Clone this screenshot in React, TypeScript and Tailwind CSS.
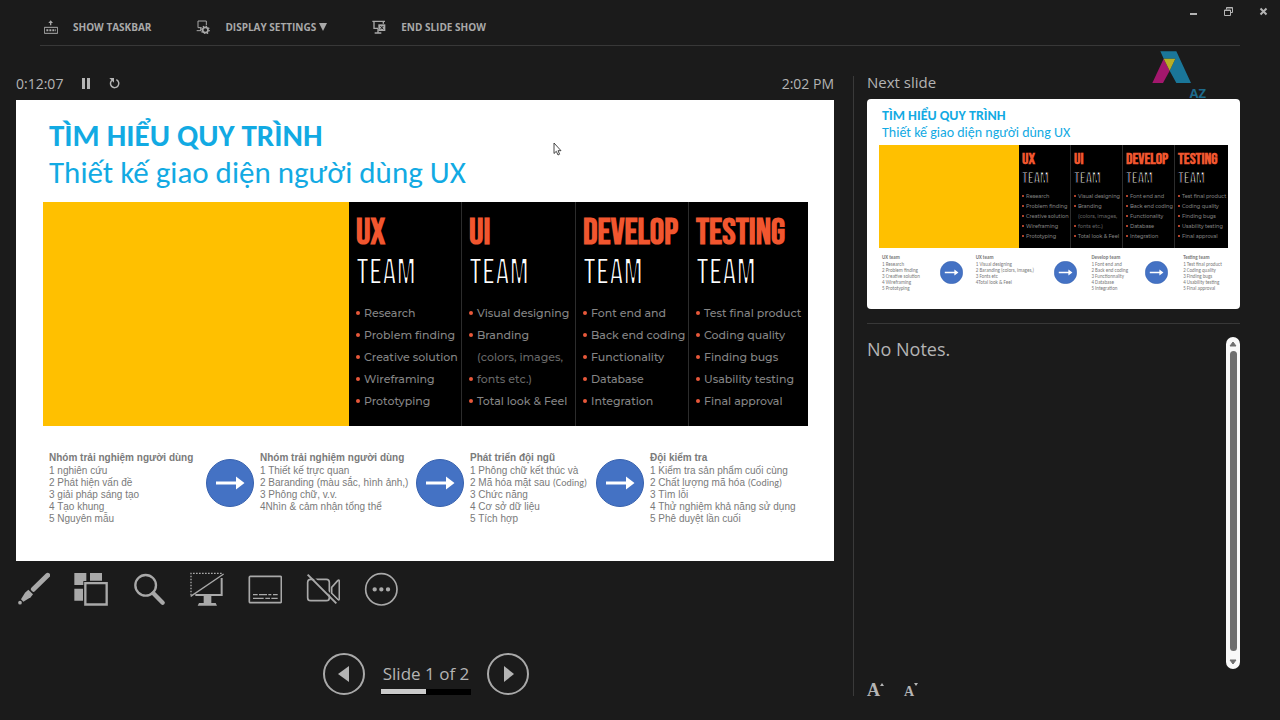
import React from "react";

type Team = { name: string; items: { text: string; bullet?: boolean; dim?: boolean }[] };
type Group = { title: string; lines: React.ReactNode[] };

const teams: Team[] = [
  {
    name: "UX",
    items: [
      { text: "Research" },
      { text: "Problem finding" },
      { text: "Creative solution" },
      { text: "Wireframing" },
      { text: "Prototyping" },
    ],
  },
  {
    name: "UI",
    items: [
      { text: "Visual designing" },
      { text: "Branding" },
      { text: "(colors, images,", bullet: false, dim: true },
      { text: "fonts etc.)", dim: true },
      { text: "Total look & Feel" },
    ],
  },
  {
    name: "DEVELOP",
    items: [
      { text: "Font end and" },
      { text: "Back end coding" },
      { text: "Functionality" },
      { text: "Database" },
      { text: "Integration" },
    ],
  },
  {
    name: "TESTING",
    items: [
      { text: "Test final product" },
      { text: "Coding quality" },
      { text: "Finding bugs" },
      { text: "Usability testing" },
      { text: "Final approval" },
    ],
  },
];

const coding = <span className="font-['Carlito','Lato',sans-serif]">(Coding)</span>;

const currentGroups: Group[] = [
  {
    title: "Nhóm trải nghiệm người dùng",
    lines: ["1 nghiên cứu", "2 Phát hiện vấn đề", "3 giải pháp sáng tạo", "4 Tạo khung", "5 Nguyên mẫu"],
  },
  {
    title: "Nhóm trải nghiệm người dùng",
    lines: ["1 Thiết kế trực quan", "2 Baranding (màu sắc, hình ảnh,)", "3 Phông chữ, v.v.", "4Nhìn & cảm nhận tổng thể"],
  },
  {
    title: "Phát triển đội ngũ",
    lines: ["1 Phông chữ kết thúc và", <>2 Mã hóa mặt sau {coding}</>, "3 Chức năng", "4 Cơ sở dữ liệu", "5 Tích hợp"],
  },
  {
    title: "Đội kiểm tra",
    lines: [
      "1 Kiểm tra sản phẩm cuối cùng",
      <>2 Chất lượng mã hóa {coding}</>,
      "3 Tìm lỗi",
      "4 Thử nghiệm khả năng sử dụng",
      "5 Phê duyệt lần cuối",
    ],
  },
];

const nextGroups: Group[] = [
  { title: "UX team", lines: ["1 Research", "2 Problem finding", "3 Creative solution", "4 Wireframing", "5 Prototyping"] },
  { title: "UX team", lines: ["1 Visual designing", "2 Baranding (colors, images,)", "3 Fonts etc", "4Total look & Feel"] },
  { title: "Develop team", lines: ["1 Font end and", "2 Back end coding", "3 Functionnality", "4 Database", "5 Integration"] },
  { title: "Testing team", lines: ["1 Test final product", "2 Coding quality", "3 Finding bugs", "4 Usability testing", "5 Final approval"] },
];

const large = {
  slide: "bg-white pt-[17px] pb-9 pl-[27px] pr-[26px]",
  title: "pl-[6px] text-[31px] leading-[37px]",
  panel: "mt-[11px] grid grid-cols-[306fr_112fr_114fr_113fr_120fr]",
  col: "pt-3 pb-[14px] pl-[7px]",
  head: "text-[36px] leading-10",
  team: "[-webkit-text-stroke:2px_#000]",
  list: "mt-2 text-[11px] font-medium leading-[22px]",
  bullet: "mr-1 size-1",
  groups: "mt-[26px] grid grid-cols-[157fr_54fr_156fr_54fr_126fr_54fr_158fr] pl-[6px] font-['Liberation_Sans',sans-serif] text-[10px] leading-3",
  circle: "mt-[7px] size-12",
};

const small: typeof large = {
  slide: "rounded bg-white pt-2 pb-[18px] px-3",
  title: "pl-[3px] text-[14px] leading-[17px]",
  panel: "mt-1 grid grid-cols-[140fr_51fr_52fr_52fr_54fr]",
  col: "pt-[5px] pb-[7px] pl-[3px]",
  head: "text-[16px] leading-[19px]",
  team: "[-webkit-text-stroke:1px_#000]",
  list: "mt-[3px] text-[5px] font-medium leading-[10px]",
  bullet: "mr-[2px] size-[2px]",
  groups: "mt-[6px] grid grid-cols-[58fr_36fr_78fr_38fr_54fr_38fr_45fr] pl-[3px] font-['Carlito','Lato',sans-serif] text-[5px] leading-[6px]",
  circle: "mt-[7px] size-[23px]",
};

function Slide({ s, groups }: { s: typeof large; groups: Group[] }) {
  return (
    <article className={s.slide}>
      <div className={`${s.title} font-['Carlito','Lato',sans-serif] whitespace-nowrap text-[#12aae3]`}>
        <h2 className="font-bold">TÌM HIỂU QUY TRÌNH</h2>
        <p>Thiết kế giao diện người dùng UX</p>
      </div>
      <div className={`${s.panel} bg-black`}>
        <div className="bg-[#ffc000]" />
        {teams.map((t, i) => (
          <section key={t.name} className={`${s.col} min-w-0 whitespace-nowrap ${i > 0 ? "border-l border-[#2c2c2c]" : ""}`}>
            <h3 className={`${s.head} font-['Bebas_Neue','Roboto_Condensed','Liberation_Sans_Narrow',sans-serif]`}>
              <span className="block font-bold text-[#f1562f]">{t.name}</span>
              <span className={`${s.team} block font-light text-white`}>TEAM</span>
            </h3>
            <ul className={`${s.list} font-['Montserrat','Inter',sans-serif]`}>
              {t.items.map((it) => (
                <li key={it.text} className={`flex items-center ${it.dim ? "text-[#686868]" : "text-[#858585]"}`}>
                  <span className={`${s.bullet} shrink-0 rounded-full ${it.bullet === false ? "" : "bg-[#e8583a]"}`} />
                  {it.text}
                </li>
              ))}
            </ul>
          </section>
        ))}
      </div>
      <div className={`${s.groups} whitespace-nowrap text-[#7a7a7a]`}>
        {groups.map((g, i) => (
          <React.Fragment key={i}>
            {i > 0 && (
              <svg className={s.circle} viewBox="0 0 48 48" aria-hidden="true">
                <circle cx="24" cy="24" r="23.5" fill="#4472c4" stroke="#3862ae" />
                <path d="M10 22.500h20v-5l8.500 6.500-8.500 6.500v-5H10z" fill="#fff" />
              </svg>
            )}
            <section className="min-w-0">
              <h4 className="mb-px font-bold">{g.title}</h4>
              {g.lines.map((l, j) => (
                <p key={j}>{l}</p>
              ))}
            </section>
          </React.Fragment>
        ))}
      </div>
    </article>
  );
}

const tools: { label: string; art: React.ReactNode }[] = [
  {
    label: "Pen",
    art: (
      <>
        <path d="M52 52 95 10" stroke="currentColor" strokeWidth="15" strokeLinecap="round" />
        <path d="m37 53 14 14-7 9-22 13-7-7 12-20z" fill="currentColor" />
        <path d="m38 49 18 18" stroke="#1b1b1b" strokeWidth="3" />
        <circle cx="12" cy="92" r="5.500" fill="currentColor" />
      </>
    ),
  },
  {
    label: "See all slides",
    art: (
      <>
        <path d="M1 3h36v24h-9v12H1zM48 3h36v23H48zM1 50h26v36H1z" fill="currentColor" />
        <path d="M34 33.500h64v64H34z" stroke="currentColor" strokeWidth="7" />
      </>
    ),
  },
  {
    label: "Zoom into the slide",
    art: (
      <>
        <circle cx="41" cy="40" r="31" stroke="currentColor" strokeWidth="7" />
        <path d="m64 64 28 28" stroke="currentColor" strokeWidth="13" strokeLinecap="round" />
      </>
    ),
  },
  {
    label: "Black or unblack slide show",
    art: (
      <>
        <path d="M3 70V4h94" stroke="currentColor" strokeWidth="4" strokeDasharray="5 4" />
        <path d="M2 73 101 6" stroke="currentColor" strokeWidth="4" />
        <path d="M95 18v51H16" stroke="currentColor" strokeWidth="6" />
        <path d="M41 70h23v23h13l4 8H23l4-8h14z" fill="currentColor" />
      </>
    ),
  },
  {
    label: "Toggle subtitles",
    art: (
      <>
        <rect x="4" y="13" width="96" height="79" rx="3" stroke="currentColor" strokeWidth="5" />
        <path d="M15 68h14m4 0h24m4 0h9m5 0h14M15 79h32m5 0h14m4 0h19" stroke="currentColor" strokeWidth="4" />
      </>
    ),
  },
  {
    label: "Toggle camera",
    art: (
      <>
        <rect x="5" y="22" width="65" height="64" rx="9" stroke="currentColor" strokeWidth="5" />
        <path d="M77 46 95 26q5-4 5 3v50q0 7-5 3L77 64z" stroke="currentColor" strokeWidth="5" />
        <path d="m10 4 86 86" stroke="#1b1b1b" strokeWidth="5" />
        <path d="m5 8 86 86" stroke="currentColor" strokeWidth="6" />
      </>
    ),
  },
  {
    label: "More slide show options",
    art: (
      <>
        <circle cx="52" cy="52" r="47" stroke="currentColor" strokeWidth="5" />
        <path d="M32 52h.1M52 52h.1M72 52h.1" stroke="currentColor" strokeWidth="13" strokeLinecap="round" />
      </>
    ),
  },
];

function Header() {
  return (
    <header>
      <div className="flex h-[45px] justify-between">
        <nav className="ml-11 mt-[9px] flex items-center gap-[45px] text-[10px] leading-4 font-bold text-[#a9a9a9]">
          <button className="flex items-center gap-[15px]">
            <svg width="14" height="14" viewBox="0 0 42 42" fill="none" stroke="currentColor">
              <path d="M1 22h40v18H1z" strokeWidth="3" />
              <path d="M7 31h6m3 0h6m3 0h6m3 0h2" strokeWidth="6" />
              <path d="m13 9 7-8 7 8h-5v7h-4V9z" fill="currentColor" stroke="none" />
            </svg>
            SHOW TASKBAR
          </button>
          <button className="flex items-center gap-[15px]">
            <svg width="14" height="14" viewBox="0 0 42 42" fill="none" stroke="currentColor" strokeWidth="3">
              <path d="M17 23H6V3h25v12M14 23v9M2 32h14" />
              <circle cx="28" cy="30" r="8" strokeWidth="5" />
              <circle cx="28" cy="30" r="11.500" strokeWidth="4" strokeDasharray="4 5" />
            </svg>
            <span className="flex items-center gap-[3px]">
              DISPLAY SETTINGS
              <svg width="8" height="8" viewBox="0 0 8 8"><path d="M0 0h8L4 8z" fill="currentColor" /></svg>
            </span>
          </button>
          <button className="flex items-center gap-[15px]">
            <svg width="14" height="14" viewBox="0 0 42 42" fill="none" stroke="currentColor" strokeWidth="4">
              <path d="M1 4h38M6 4v21h12M34 4v7M18 27v11M8 39h20" />
              <path d="M19 13h21v20H19z" fill="currentColor" stroke="none" />
              <path d="m25 18 9 10m0-10-9 10" stroke="#1b1b1b" strokeWidth="3" />
            </svg>
            END SLIDE SHOW
          </button>
        </nav>
        <div className="mr-3 flex h-[22px] items-center gap-[26px] text-[#b4b4b4]">
          <button aria-label="Minimize">
            <svg width="9" height="9" viewBox="0 0 9 9"><path d="M1 6h7v2H1z" fill="currentColor" /></svg>
          </button>
          <button aria-label="Restore">
            <svg width="9" height="9" viewBox="0 0 9 9" fill="none" stroke="currentColor">
              <path d="M2.500 2.500v-2h6v5h-2M.5 3h6v5.500h-6zM.5 3.500h6M2.500 1h6" />
            </svg>
          </button>
          <button aria-label="Close">
            <svg width="9" height="9" viewBox="0 0 9 9" stroke="currentColor" strokeWidth="2"><path d="m1.500 1.500 6 6m0-6-6 6" /></svg>
          </button>
        </div>
      </div>
      <div className="mx-10 border-t border-[#383838]" />
    </header>
  );
}

function RoundButton({ label, d }: { label: string; d: string }) {
  return (
    <button aria-label={label} className="flex size-[42px] items-center justify-center rounded-full border-2 border-[#a9a9a9] text-[#b4b4b4]">
      <svg width="12" height="18" viewBox="0 0 12 18"><path d={d} fill="currentColor" /></svg>
    </button>
  );
}

export default function App() {
  return (
    <div className="flex min-h-screen flex-col bg-[#1b1b1b] font-['Open_Sans','Noto_Sans',sans-serif] text-[#b4b4b4]">
      <Header />
      <main className="flex flex-1 pl-4 pr-10">
        <div className="flex min-w-0 flex-1 flex-col pt-[22px] pb-[25px]">
          <div className="flex h-8 items-center pb-0.5 text-[14px]">
            <span>0:12:07</span>
            <button aria-label="Pause the timer" className="ml-[19px]">
              <svg width="8" height="11" viewBox="0 0 8 11"><path d="M0 0h3v11H0zM5 0h3v11H5z" fill="currentColor" /></svg>
            </button>
            <button aria-label="Restart the timer" className="ml-[19px]">
              <svg width="11" height="12" viewBox="0 0 33 36" fill="none" stroke="currentColor">
                <path d="M22 8a12.500 12.500 0 1 1-12 1" strokeWidth="4.500" />
                <path d="M1 3h14v14z" fill="currentColor" stroke="none" />
              </svg>
            </button>
            <span className="ml-auto">2:02 PM</span>
          </div>
          <div className="relative">
            <Slide s={large} groups={currentGroups} />
            <svg className="absolute left-[537px] top-[42px]" width="9" height="14" viewBox="0 0 9 14" aria-hidden="true">
              <path d="M1 1v10.500l2.300-2.200 1.700 3.700 1.600-.8-1.600-3.500H8z" fill="#fff" stroke="#333" strokeWidth=".9" />
            </svg>
          </div>
          <div className="mt-[11px] flex gap-6 text-[#a9a9a9]">
            {tools.map((t) => (
              <button key={t.label} aria-label={t.label}>
                <svg width="34" height="34" viewBox="0 0 102 102" fill="none">{t.art}</svg>
              </button>
            ))}
          </div>
          <div className="mt-auto flex justify-center gap-4 pt-8 pl-0.5">
            <RoundButton label="Previous slide" d="M11 1v16L0 9z" />
            <div className="w-[90px] text-center">
              <p className="mt-[9px] text-[17px] leading-6 whitespace-nowrap">Slide 1 of 2</p>
              <div className="mt-[3px] h-[6px] bg-black">
                <div className="h-[5px] w-1/2 bg-[#cacaca]" />
              </div>
            </div>
            <RoundButton label="Next slide" d="M2 1v16l10-8z" />
          </div>
        </div>
        <div className="mt-[30px] mb-6 ml-[19px] mr-[13px] w-px bg-[#3a3a3a]" />
        <aside className="flex w-[373px] shrink-0 flex-col pt-[5px]">
          <div className="flex h-12 items-end justify-between">
            <h2 className="mb-[5px] text-[15px] leading-6">Next slide</h2>
            <div className="mr-[34px] flex h-12 flex-col">
              <svg className="shrink-0" width="39" height="33" viewBox="65 153 117 99" aria-hidden="true">
                <path d="m100 176-34 73h32l20-37z" fill="#a3176d" />
                <path d="M90 154h48l44 95h-44l-20-37 17-36h-35z" fill="#1a7699" />
                <path d="M100 176h35l-17 36z" fill="#b8ae25" />
              </svg>
              <span className="ml-[38px] text-[13px] leading-[18px] font-bold text-[#1e6a8c]">AZ</span>
            </div>
          </div>
          <Slide s={small} groups={nextGroups} />
          <div className="mt-[14px] border-t border-[#383838]" />
          <div className="flex flex-1 justify-between pt-[13px]">
            <p className="text-[18px] leading-6">No Notes.</p>
            <div className="flex w-[14px] flex-col items-center justify-between rounded-full bg-[#f8f8f8] py-1 text-[#6e6e6e]">
              <button aria-label="Scroll up">
                <svg width="8" height="6" viewBox="0 0 8 6"><path d="M4 1 7 5H1z" fill="currentColor" stroke="currentColor" strokeLinejoin="round" /></svg>
              </button>
              <div className="mt-1 mb-2 w-[7px] flex-1 rounded-full bg-[#6e6e6e]" />
              <button aria-label="Scroll down">
                <svg width="8" height="6" viewBox="0 0 8 6"><path d="M4 5 1 1h6z" fill="currentColor" stroke="currentColor" strokeLinejoin="round" /></svg>
              </button>
            </div>
          </div>
          <div className="flex h-[51px] items-start gap-5 pt-[11px] font-['Liberation_Serif',serif] font-bold">
            <button aria-label="Make the text larger" className="flex items-start text-[18px] leading-5">
              A
              <svg className="mt-[3px]" width="4" height="3" viewBox="0 0 4 3"><path d="M2 0 4 3H0z" fill="currentColor" /></svg>
            </button>
            <button aria-label="Make the text smaller" className="flex items-start text-[14px] leading-6">
              A
              <svg className="mt-[3px]" width="4" height="3" viewBox="0 0 4 3"><path d="M0 0h4L2 3z" fill="currentColor" /></svg>
            </button>
          </div>
        </aside>
      </main>
    </div>
  );
}
